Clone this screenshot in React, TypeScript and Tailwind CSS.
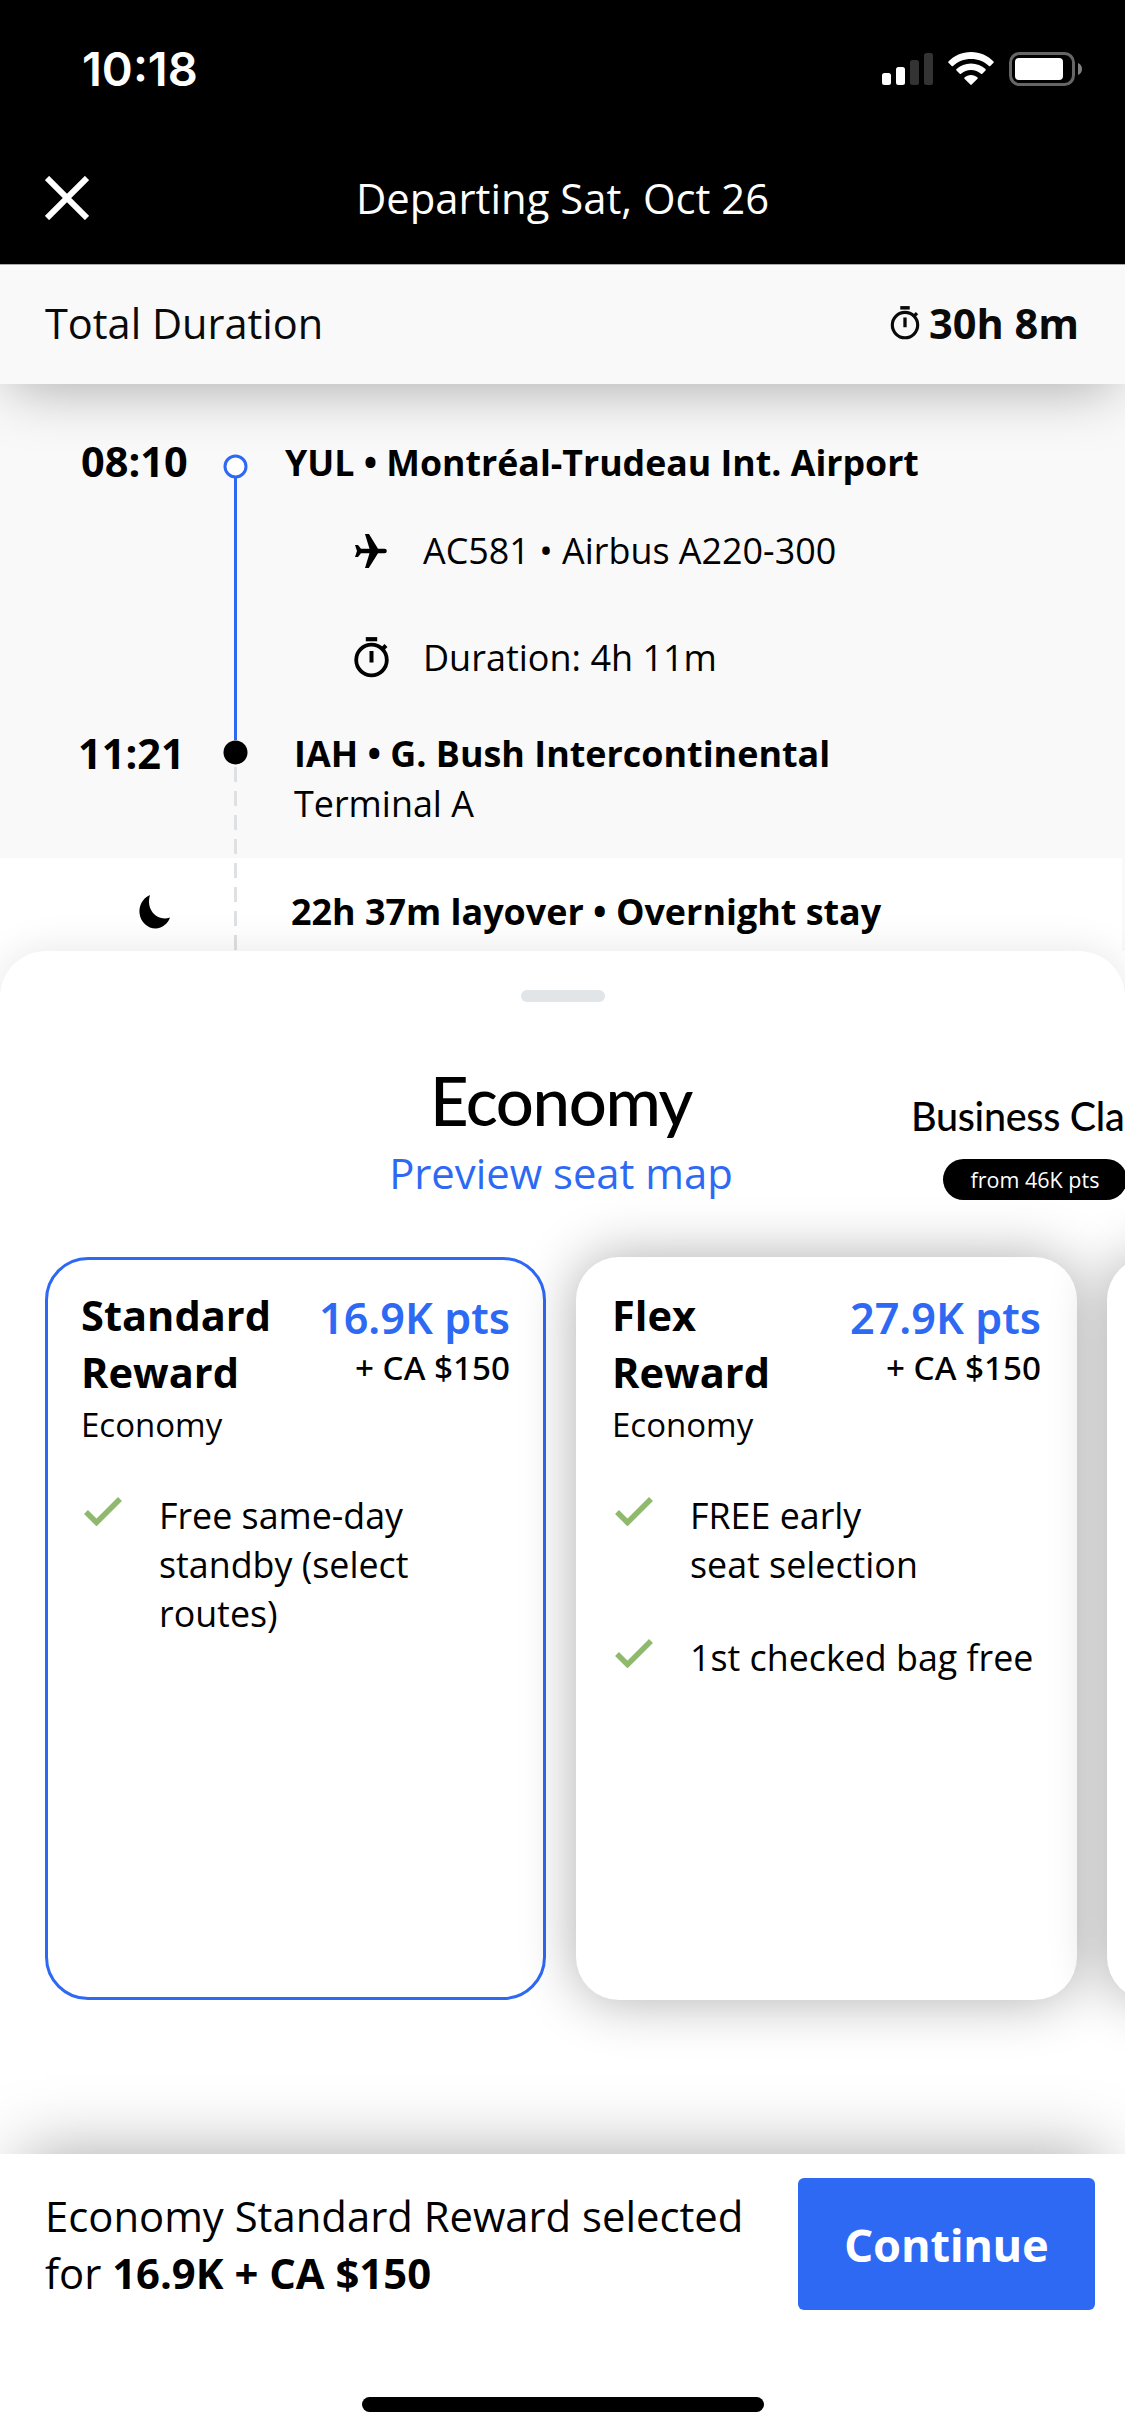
import React from 'react';

type Fare = {
  name: string;
  points: string;
  perks: string[][];
  selected?: boolean;
};

const fares: Fare[] = [
  {
    name: 'Standard',
    points: '16.9K pts',
    perks: [['Free same-day', 'standby (select', 'routes)']],
    selected: true,
  },
  {
    name: 'Flex',
    points: '27.9K pts',
    perks: [['FREE early', 'seat selection'], ['1st checked bag free']],
  },
];

function Stopwatch({ className }: { className: string }) {
  return (
    <svg viewBox="0 0 35 41" fill="none" stroke="currentColor" className={className}>
      <circle cx="17.5" cy="23" r="15.3" strokeWidth="3.8" />
      <path d="M17.5 14v11.500M28 12.500l4-4" strokeWidth="4" />
      <path d="M11.800 2.200h11.400" strokeWidth="4.200" />
    </svg>
  );
}

function StatusBar() {
  return (
    <div className="flex h-[138px] items-center justify-between pl-[82px] pr-[43px] text-white">
      <span className="-mt-[1px] font-['Inter'] text-[47px] font-semibold leading-none">10:18</span>
      <div className="flex items-center gap-[15px]">
        <svg width="51" height="34" viewBox="0 0 51 34" fill="#fff">
          <rect x="0" y="21" width="9" height="12" rx="2.5" />
          <rect x="14" y="15" width="9" height="18" rx="2.5" />
          <rect x="28" y="8" width="9" height="25" rx="2.5" fill="#333" />
          <rect x="42" y="1" width="9" height="32" rx="2.5" fill="#333" />
        </svg>
        <svg width="46" height="34" viewBox="0 0 46 34" fill="#fff">
          <path d="M23 0C14 0 6 3.600 0.500 9.500a1 1 0 0 0 0 1.300l3.200 3.200a1 1 0 0 0 1.300 0C9.700 9.600 16 7 23 7s13.300 2.600 18 7a1 1 0 0 0 1.300 0l3.200-3.200a1 1 0 0 0 0-1.300C40 3.600 32 0 23 0Z" />
          <path d="M23 11.500c-5.600 0-10.700 2.100-14.500 5.600a1 1 0 0 0 0 1.400l3.200 3.200a1 1 0 0 0 1.300 0c2.700-2.300 6.200-3.700 10-3.700s7.300 1.400 10 3.700a1 1 0 0 0 1.300 0l3.200-3.200a1 1 0 0 0 0-1.400c-3.800-3.500-8.900-5.600-14.500-5.600Z" />
          <path d="M23 23c-2.500 0-4.800.9-6.500 2.400a1 1 0 0 0 0 1.400l5.800 5.800a1 1 0 0 0 1.400 0l5.800-5.800a1 1 0 0 0 0-1.400C27.800 23.900 25.500 23 23 23Z" />
        </svg>
        <svg width="73" height="34" viewBox="0 0 73 34" fill="none">
          <rect x="1.5" y="1.5" width="63" height="31" rx="9" stroke="#666" strokeWidth="3" />
          <rect x="6" y="6" width="48" height="22" rx="4" fill="#fff" />
          <path d="M69 11v12c2.500-1 4-3.300 4-6s-1.500-5-4-6Z" fill="#808080" />
        </svg>
      </div>
    </div>
  );
}

function Header() {
  return (
    <header className="h-[264px] shrink-0 bg-black text-white">
      <StatusBar />
      <div className="grid grid-cols-[200px_1fr_200px] items-center pt-[27px]">
        <svg width="44" height="44" viewBox="0 0 44 44" stroke="#fff" strokeWidth="6" className="ml-[45px]">
          <path d="M2 2l40 40M42 2L2 42" />
        </svg>
        <h1 className="text-center text-[41.8px] leading-[66px]">Departing Sat, Oct 26</h1>
      </div>
    </header>
  );
}

function Timeline() {
  return (
    <div className="relative flex h-[567px] shrink-0 flex-col bg-white">
      <section className="h-[474px] shrink-0 bg-[#f9f9f9] pt-[52px]">
        <div className="flex h-[50px]">
          <b className="w-[204px] pl-[81px] text-[41.5px] leading-[50px]">08:10</b>
          <b className="ml-[81px] whitespace-nowrap text-[35.7px] leading-[52px]">YUL • Montréal-Trudeau Int. Airport</b>
        </div>
        <div className="mt-[40px] flex h-[50px] items-center pl-[355px]">
          <svg width="32" height="34" viewBox="0 0 32 34">
            <path d="M0 11h3l3 3.700h8.500L10 0h4l9 14.700h6.500a2.300 2.300 0 0 1 0 4.600H23L13.800 34H10l4.500-14.700H6L3 23H0l2-6Z" />
          </svg>
          <span className="ml-[36px] text-[35.9px] leading-[52px]">AC581 • Airbus A220-300</span>
        </div>
        <div className="mt-[56px] flex h-[50px] items-center pl-[354px]">
          <Stopwatch className="h-[41px] w-[35px]" />
          <span className="ml-[34px] mt-[2px] text-[36px] leading-[50px]">Duration: 4h 11m</span>
        </div>
        <div className="mt-[46px] flex">
          <b className="w-[204px] pl-[78px] text-[41.5px] leading-[50px]">11:21</b>
          <div className="ml-[90px] mt-[1px] text-[35.9px] leading-[50px]">
            <b>IAH • G. Bush Intercontinental</b>
            <p>Terminal A</p>
          </div>
        </div>
      </section>
      <section className="flex flex-1 items-start border-r-[3px] border-[#f9f9f9] pt-[28px]">
        <svg width="32" height="34" viewBox="0 0 32 34" className="ml-[139px] mt-[9px]">
          <path d="M11 0C3 3.500 0 11 0.500 18 1.500 27.500 9 33.500 16.500 33.500 23.500 33 29 28.500 31 22.500 24 25 18 22.500 14 18 10 13 9 7 11 0Z" />
        </svg>
        <b className="ml-[120px] mt-[1px] text-[35.9px] leading-[50px]">22h 37m layover • Overnight stay</b>
      </section>

      {/* Route line running beside the rows */}
      <svg width="25" height="567" viewBox="0 0 25 567" fill="none" className="absolute left-[223px] top-0">
        <path d="M12.5 93V356" stroke="#2e69f4" strokeWidth="3" />
        <path d="M12.5 383V567" stroke="#dde1e4" strokeWidth="3" strokeDasharray="15 9" />
        <circle cx="12.5" cy="82.5" r="10.5" fill="#fff" stroke="#2e69f4" strokeWidth="3" />
        <circle cx="12.5" cy="368.5" r="12" fill="#000" />
      </svg>
    </div>
  );
}

function FareCard({ fare }: { fare: Fare }) {
  return (
    <article
      className={
        fare.selected
          ? 'h-[743px] w-[501px] shrink-0 rounded-[43px] border-[3px] border-[#2e69f4] px-[33px] pt-[27px]'
          : 'h-[743px] w-[501px] shrink-0 rounded-[43px] bg-white px-[36px] pt-[30px] shadow-[0_0_56px_rgba(0,0,0,0.32)]'
      }
    >
      <div className="flex justify-between">
        <div>
          <h3 className="text-[41.6px] font-bold leading-[57px]">
            {fare.name}
            <br />
            Reward
          </h3>
          <p className="text-[33px] leading-[47px]">Economy</p>
        </div>
        <div className="whitespace-nowrap text-right">
          <p className="font-['Noto_Sans'] text-[43.2px] font-semibold leading-[62px] text-[#2e69f4]">{fare.points}</p>
          <p className="font-['Noto_Sans'] text-[33.2px] font-medium leading-[38px]">+ CA $150</p>
        </div>
      </div>
      <ul className="mt-[43px] space-y-[44px]">
        {fare.perks.map((perk) => (
          <li key={perk[0]} className="flex">
            <svg width="38" height="29" viewBox="0 0 38 29" fill="none" className="ml-[3px] mt-[6px] shrink-0">
              <path d="M2 15L12.5 25.500 36 2" stroke="#8fba6e" strokeWidth="5.500" />
            </svg>
            <p className="ml-[37px] whitespace-nowrap text-[35.8px] leading-[49px]">
              {perk.map((line) => (
                <span key={line} className="block">
                  {line}
                </span>
              ))}
            </p>
          </li>
        ))}
      </ul>
    </article>
  );
}

function FareSheet() {
  return (
    <section className="relative z-10 flex h-[1203px] shrink-0 flex-col rounded-t-[46px] bg-white pt-[39px] shadow-[0_0_40px_rgba(0,0,0,0.1)]">
      <div className="mx-auto h-[12px] w-[84px] shrink-0 rounded-[6px] bg-[#e1e5e8]" />
      <div className="mt-[58px] flex h-[197px] shrink-0">
        <div className="w-[911px] shrink-0 pl-[211px] text-center">
          <h2 className="font-['Lato'] text-[67px] font-medium leading-[80px] tracking-[-1.4px]">Economy</h2>
          <p className="text-[41.8px] leading-[66px] text-[#2e69f4]">Preview seat map</p>
        </div>
        <div className="shrink-0 pt-[28px]">
          <h2 className="whitespace-nowrap font-['Lato'] text-[39.5px] font-medium leading-[56px] tracking-[-0.3px]">
            Business Class
          </h2>
          <p className="ml-[32px] mt-[15px] w-[184px] rounded-full bg-black text-center text-[21.5px] leading-[41px] text-white">
            from 46K pts
          </p>
        </div>
      </div>
      <div className="flex gap-[30px] pl-[45px]">
        {fares.map((fare) => (
          <FareCard key={fare.name} fare={fare} />
        ))}
        <article className="h-[743px] w-[501px] shrink-0 rounded-[43px] bg-white shadow-[0_0_56px_rgba(0,0,0,0.32)]" />
      </div>
    </section>
  );
}

export default function App() {
  return (
    <div className="flex h-[2436px] w-[1125px] flex-col overflow-hidden bg-white font-['Open_Sans',sans-serif] text-black">
      <Header />
      <div className="relative z-10 flex h-[120px] shrink-0 items-center justify-between border-t border-[#aaa] bg-[#f9f9f9] pl-[45px] pr-[46px] text-[41.5px] text-[#0a0a0a] shadow-[0_12px_60px_-10px_rgba(0,0,0,0.34)]">
        <span className="-mt-[2px]">Total Duration</span>
        <span className="-mt-[2px] flex items-center gap-[9px]">
          <Stopwatch className="mb-[2px] h-[34px] w-[30px]" />
          <b>30h 8m</b>
        </span>
      </div>
      <Timeline />
      <FareSheet />
      <footer className="relative z-20 h-[282px] shrink-0 bg-white shadow-[0_-22px_66px_-22px_rgba(0,0,0,0.34)]">
        <div className="flex justify-between pl-[45px] pr-[30px] pt-[24px]">
          <p className="whitespace-nowrap pt-[9px] text-[41.8px] leading-[57px]">
            Economy Standard Reward selected
            <br />
            for <b>16.9K + CA $150</b>
          </p>
          <button className="h-[132px] w-[297px] rounded-[6px] bg-[#2e69f4] pt-[2px] font-['Noto_Sans'] text-[45px] font-bold text-white">
            Continue
          </button>
        </div>
        <div className="mx-auto mt-[87px] h-[15px] w-[402px] rounded-full bg-black" />
      </footer>
    </div>
  );
}
